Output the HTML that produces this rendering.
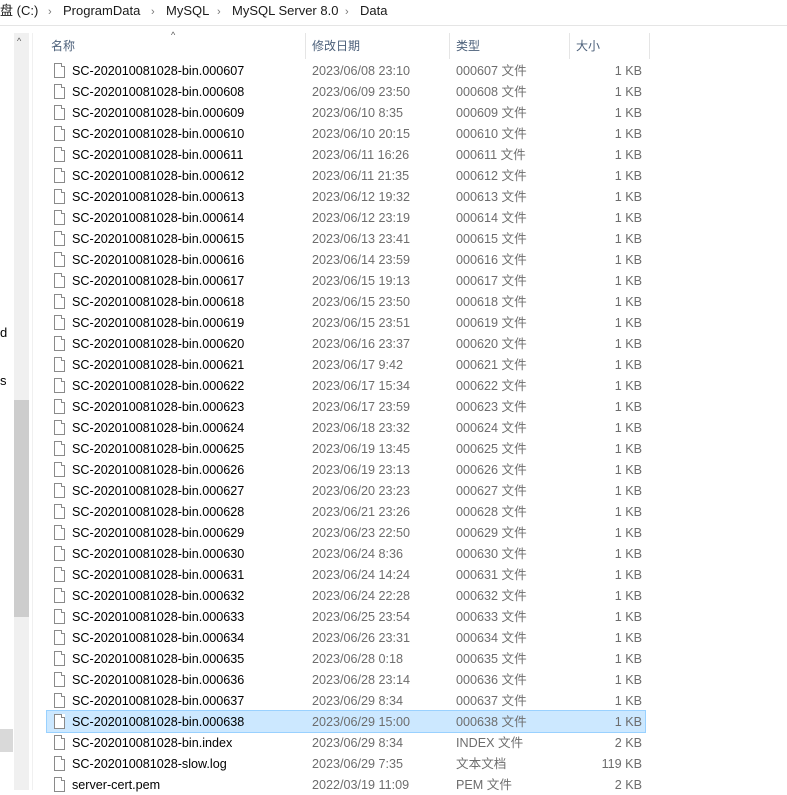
<!DOCTYPE html>
<html><head><meta charset="utf-8"><style>
body{margin:0;width:787px;height:790px;overflow:hidden;background:#fff;font-family:"Liberation Sans","Noto Sans CJK SC",sans-serif;font-size:12px;color:#000;position:relative}
.crumb{position:absolute;top:0;left:0;right:0;height:25px;border-bottom:1px solid #e5e5e5}
.crumb span{position:absolute;top:3px;font-size:13px;color:#1a1a1a;line-height:16px}
.crumb .a{color:#777;font-size:11px;top:4px}
.sb{position:absolute;left:14px;top:33px;width:15px;height:757px;background:#f0f0f0}
.th{position:absolute;left:14px;top:400px;width:15px;height:217px;background:#cdcdcd}
.sep{position:absolute;left:32px;top:33px;width:1px;height:757px;background:#f0f0f0}
.hd{position:absolute;top:38px;color:#4c607a;font-size:12px;line-height:16px}
.hl{position:absolute;top:33px;width:1px;height:26px;background:#e5e5e5}
.r{position:absolute;left:47px;width:598px;height:21px}
.r.sel{background:#cce8ff;outline:1px solid #99d1ff}
.r .ic{position:absolute;left:7px;top:3px;width:9px;height:13px;border:1px solid #8a8a8a;background:#fff}
.r .ic::after{content:"";position:absolute;right:-1px;top:-1px;width:3px;height:3px;background:#fff;border-left:1px solid #8a8a8a;border-bottom:1px solid #8a8a8a}
.r span{position:absolute;top:4px;white-space:nowrap;line-height:15px;font-size:12.6px}
.n{left:25px;color:#000}
.d{left:265px;color:#6d6d6d}
.t{left:409px;color:#6d6d6d}
.s{right:3px;color:#6d6d6d}
</style></head><body>
<div class="crumb">
<span style="left:0">盘 (C:)</span><span class="a" style="left:48px">›</span>
<span style="left:63px">ProgramData</span><span class="a" style="left:151px">›</span>
<span style="left:166px">MySQL</span><span class="a" style="left:217px">›</span>
<span style="left:232px">MySQL Server 8.0</span><span class="a" style="left:345px">›</span>
<span style="left:360px">Data</span>
</div>
<div class="sb"></div><div class="th"></div><div class="sep"></div>
<div style="position:absolute;left:17px;top:36px;font-size:9px;color:#555">^</div>
<div style="position:absolute;left:0;top:325px;font-size:13px">d</div>
<div style="position:absolute;left:0;top:373px;font-size:13px">s</div>
<div style="position:absolute;left:0;top:729px;width:13px;height:23px;background:#d9d9d9"></div>
<div style="position:absolute;left:171px;top:30px;font-size:9px;color:#555">^</div>
<div class="hd" style="left:51px">名称</div>
<div class="hd" style="left:312px">修改日期</div>
<div class="hd" style="left:456px">类型</div>
<div class="hd" style="left:576px">大小</div>
<div class="hl" style="left:305px"></div><div class="hl" style="left:449px"></div><div class="hl" style="left:569px"></div><div class="hl" style="left:649px"></div>
<div id="rows"></div>
<script>
var d=["06/08 23:10","06/09 23:50","06/10 8:35","06/10 20:15","06/11 16:26","06/11 21:35","06/12 19:32","06/12 23:19","06/13 23:41","06/14 23:59","06/15 19:13","06/15 23:50","06/15 23:51","06/16 23:37","06/17 9:42","06/17 15:34","06/17 23:59","06/18 23:32","06/19 13:45","06/19 23:13","06/20 23:23","06/21 23:26","06/23 22:50","06/24 8:36","06/24 14:24","06/24 22:28","06/25 23:54","06/26 23:31","06/28 0:18","06/28 23:14","06/29 8:34","06/29 15:00"];
var h="";
for(var i=0;i<d.length;i++){var n="000"+(607+i);h+='<div class="r'+(i==31?' sel':'')+'" style="top:'+(60+i*21)+'px"><div class="ic"></div><span class="n">SC-202010081028-bin.'+n+'</span><span class="d">2023/'+d[i]+'</span><span class="t">'+n+' 文件</span><span class="s">1 KB</span></div>';}
var ex=[["SC-202010081028-bin.index","2023/06/29 8:34","INDEX 文件","2 KB"],["SC-202010081028-slow.log","2023/06/29 7:35","文本文档","119 KB"],["server-cert.pem","2022/03/19 11:09","PEM 文件","2 KB"]];
for(var j=0;j<3;j++){var e=ex[j];h+='<div class="r" style="top:'+(60+(32+j)*21)+'px"><div class="ic"></div><span class="n">'+e[0]+'</span><span class="d">'+e[1]+'</span><span class="t">'+e[2]+'</span><span class="s">'+e[3]+'</span></div>';}
document.getElementById("rows").innerHTML=h;
</script>
</body></html>
